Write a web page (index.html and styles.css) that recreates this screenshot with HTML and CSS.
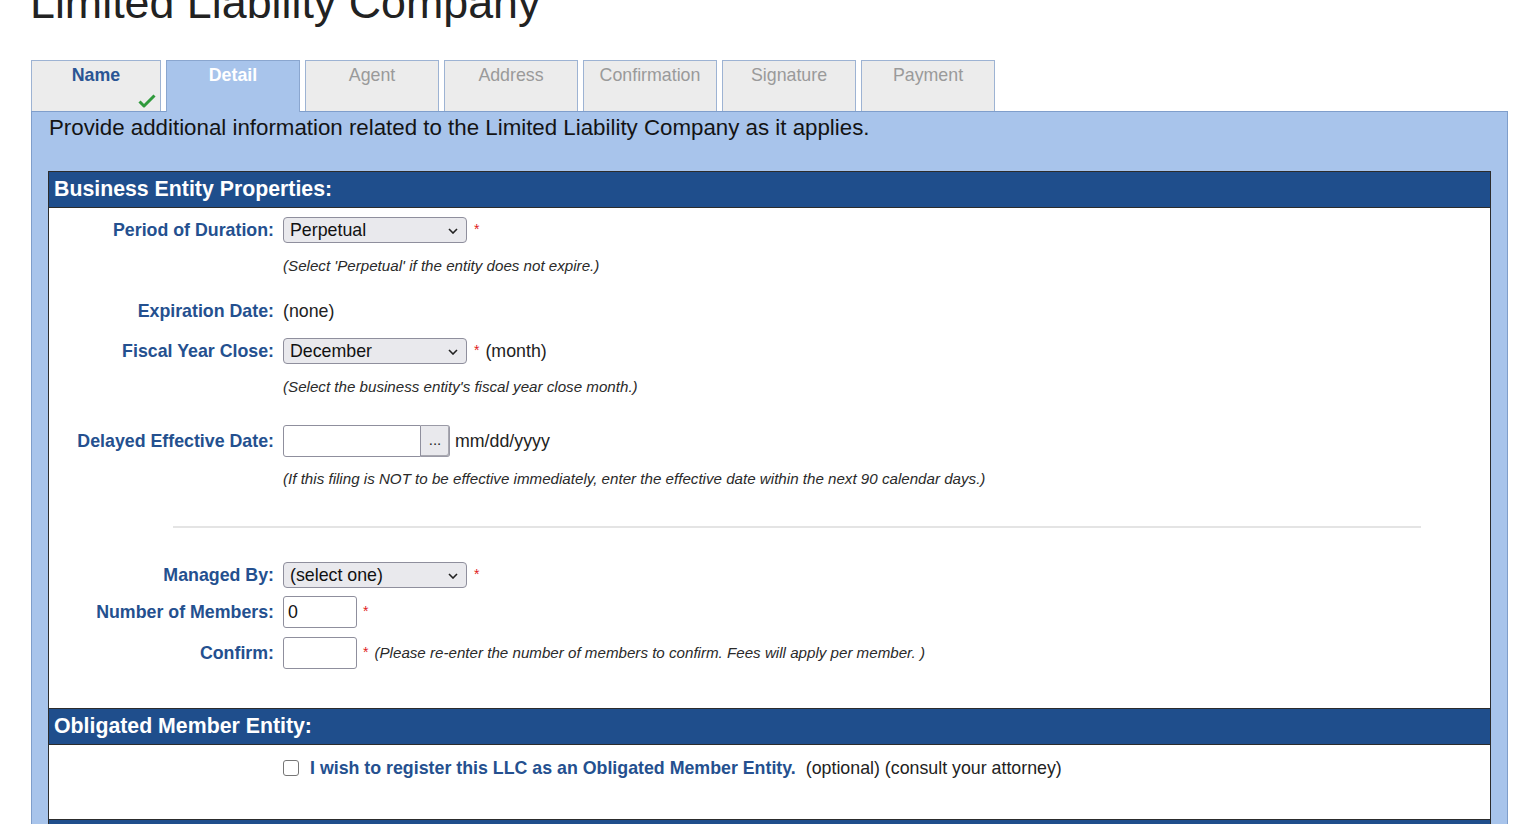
FILE: index.html
```html
<!DOCTYPE html>
<html lang="en">
<head>
<meta charset="utf-8">
<title>Limited Liability Company</title>
<link rel="stylesheet" href="styles.css">
</head>
<body>
<div class="page">
  <h1 class="title">Limited Liability Company</h1>

  <div class="tabs">
    <div class="tab tab-done tab-name">Name
      <svg class="check" width="18" height="14" viewBox="0 0 18 14"><path d="M1.5 7.5 L6 12 L16.5 1.5" fill="none" stroke="#2f9a3c" stroke-width="3" stroke-linejoin="round"/></svg>
    </div>
    <div class="tab tab-active">Detail</div>
    <div class="tab">Agent</div>
    <div class="tab">Address</div>
    <div class="tab">Confirmation</div>
    <div class="tab">Signature</div>
    <div class="tab">Payment</div>
  </div>

  <div class="panel">
    <p class="intro">Provide additional information related to the Limited Liability Company as it applies.</p>

    <div class="box">
      <div class="section-head">Business Entity Properties:</div>
      <div class="section-body">
        <div class="row row-1">
          <label class="lbl">Period of Duration:</label>
          <div class="val">
            <div class="select"><span>Perpetual</span><svg class="chev" width="10" height="6" viewBox="0 0 10 6"><path d="M1 1 L5 5 L9 1" fill="none" stroke="#222" stroke-width="1.6"/></svg></div>
            <span class="req">*</span>
          </div>
        </div>
        <div class="row hint-row hint-1">
          <span></span><div class="hint">(Select 'Perpetual' if the entity does not expire.)</div>
        </div>
        <div class="row row-exp">
          <label class="lbl">Expiration Date:</label>
          <div class="val text">(none)</div>
        </div>
        <div class="row row-fiscal">
          <label class="lbl">Fiscal Year Close:</label>
          <div class="val">
            <div class="select"><span>December</span><svg class="chev" width="10" height="6" viewBox="0 0 10 6"><path d="M1 1 L5 5 L9 1" fill="none" stroke="#222" stroke-width="1.6"/></svg></div>
            <span class="req">*</span><span class="text after-req">(month)</span>
          </div>
        </div>
        <div class="row hint-row hint-2">
          <span></span><div class="hint">(Select the business entity's fiscal year close month.)</div>
        </div>
        <div class="row row-delayed">
          <label class="lbl">Delayed Effective Date:</label>
          <div class="val">
            <div class="date-input"></div><div class="date-btn">...</div>
            <span class="text fmt">mm/dd/yyyy</span>
          </div>
        </div>
        <div class="row hint-row hint-3">
          <span></span><div class="hint">(If this filing is NOT to be effective immediately, enter the effective date within the next 90 calendar days.)</div>
        </div>
        <div class="divider"></div>
        <div class="row row-managed">
          <label class="lbl">Managed By:</label>
          <div class="val">
            <div class="select select-sm"><span>(select one)</span><svg class="chev" width="10" height="6" viewBox="0 0 10 6"><path d="M1 1 L5 5 L9 1" fill="none" stroke="#222" stroke-width="1.6"/></svg></div>
            <span class="req">*</span>
          </div>
        </div>
        <div class="row row-num">
          <label class="lbl">Number of Members:</label>
          <div class="val">
            <div class="num-input">0</div>
            <span class="req">*</span>
          </div>
        </div>
        <div class="row row-confirm">
          <label class="lbl">Confirm:</label>
          <div class="val">
            <div class="num-input"></div>
            <span class="req">*</span>
            <span class="hint inline-hint">(Please re-enter the number of members to confirm. Fees will apply per member. )</span>
          </div>
        </div>
      </div>

      <div class="section-head section-head-mid">Obligated Member Entity:</div>
      <div class="section-body section-body-ome">
        <div class="row row-check">
          <span></span>
          <div class="val">
            <span class="checkbox"></span>
            <span class="check-label">I wish to register this LLC as an Obligated Member Entity.</span>
            <span class="text opt">(optional) (consult your attorney)</span>
          </div>
        </div>
      </div>
      <div class="section-head section-head-mid"></div>
    </div>
  </div>
</div>
</body>
</html>
```

FILE: styles.css
```css
html, body {
  margin: 0;
  padding: 0;
  background: #ffffff;
  overflow: hidden;
}

body {
  font-family: "Liberation Sans", Arial, sans-serif;
  color: #222;
}

.page {
  padding-left: 31px;
  width: 1477px;
}

.title {
  margin: -20px 0 36px -1px;
  font-size: 44.8px;
  line-height: 44px;
  font-weight: normal;
  color: #222;
  height: 44px;
}

/* Tabs */
.tabs {
  display: flex;
  gap: 5px;
  height: 51px;
  position: relative;
  z-index: 2;
}

.tab {
  position: relative;
  width: 134px;
  height: 51px;
  box-sizing: border-box;
  border: 1px solid #9db3d3;
  border-bottom: none;
  background: #ececec;
  color: #9a9a9a;
  font-size: 17.8px;
  line-height: 20px;
  text-align: center;
  padding-top: 4px;
}

.tab-name {
  width: 130px;
  font-weight: bold;
  color: #2a5594;
}

.tab-active {
  background: #a8c4eb;
  color: #ffffff;
  font-weight: bold;
  height: 52px;
  border-color: #8aa6cf;
}

.check {
  position: absolute;
  right: 4px;
  bottom: 3px;
}

/* Panel */
.panel {
  background: #a8c4eb;
  border: 1px solid #7f9ecb;
  padding: 0 16px;
}

.intro {
  margin: 0;
  padding: 4px 0 0 1px;
  font-size: 22.3px;
  line-height: 24px;
  color: #141414;
  height: 55px;
}

.box {
  background: #ffffff;
  border: 1px solid #2c2c2c;
  border-bottom: none;
}

.section-head {
  background: #1f4e8c;
  color: #ffffff;
  font-weight: bold;
  font-size: 21.3px;
  height: 35px;
  line-height: 35px;
  padding-left: 5px;
  border-bottom: 1px solid #2c2c2c;
}

.section-head-mid {
  border-top: 1px solid #2c2c2c;
}

.section-body {
  padding-top: 9px;
  padding-bottom: 39px;
}

.row {
  display: grid;
  grid-template-columns: 225px 1fr;
  column-gap: 9px;
  align-items: center;
}

.lbl {
  text-align: right;
  font-weight: bold;
  color: #24508f;
  font-size: 17.8px;
  line-height: 22px;
}

.val {
  display: flex;
  align-items: center;
}

.text {
  font-size: 17.8px;
  color: #222;
  line-height: 22px;
}

.hint {
  font-style: italic;
  font-size: 15.15px;
  color: #2a2a2a;
  line-height: 18px;
}

.row-1 { height: 26px; }
.hint-1 { margin-top: 14px; height: 18px; }
.row-exp { margin-top: 23px; height: 26px; }
.row-fiscal { margin-top: 14px; height: 26px; }
.hint-2 { margin-top: 14px; height: 18px; }
.row-delayed { margin-top: 29px; height: 32px; }
.hint-3 { margin-top: 13px; height: 18px; }
.row-managed { margin-top: 34px; height: 26px; }
.row-num { margin-top: 8px; height: 32px; }
.row-confirm { margin-top: 9px; height: 32px; }

.divider {
  margin: 38px 0 0 124px;
  width: 1248px;
  height: 2px;
  background: #e4e4e4;
}

/* Select look-alike */
.select {
  position: relative;
  width: 184px;
  height: 26px;
  box-sizing: border-box;
  border: 1px solid #8f8f9d;
  border-radius: 4px;
  background: #e9e9ed;
  font-size: 17.8px;
  line-height: 24px;
  padding-left: 6px;
  color: #111;
}

.chev {
  position: absolute;
  right: 8px;
  top: 10px;
}

.req {
  color: #e02020;
  font-size: 14px;
  align-self: flex-start;
  margin: 1px 0 0 7px;
  line-height: 14px;
}

.after-req {
  margin-left: 6px;
}

.row-fiscal .req,
.row-1 .req,
.row-managed .req {
  margin-top: 5px;
}

.row-num .req,
.row-confirm .req {
  margin: 8px 0 0 6px;
}

.inline-hint {
  margin-left: 6px;
}

/* Date input */
.date-input {
  width: 138px;
  height: 32px;
  box-sizing: border-box;
  border: 1px solid #8f8f9d;
  border-radius: 3px 0 0 3px;
  background: #fff;
}

.date-btn {
  width: 29px;
  height: 32px;
  box-sizing: border-box;
  border: 1px solid #9a9aa6;
  border-left: none;
  border-radius: 0 3px 3px 0;
  background: #e9e9ed;
  box-shadow: inset -1px -1px 0 #a8a8b0;
  font-size: 15px;
  line-height: 28px;
  text-align: center;
  color: #222;
}

.fmt {
  margin-left: 5px;
}

.num-input {
  width: 74px;
  height: 32px;
  box-sizing: border-box;
  border: 1px solid #8f8f9d;
  border-radius: 3px;
  background: #fff;
  font-size: 17.8px;
  line-height: 30px;
  padding-left: 4px;
  color: #111;
}

/* Obligated member section */
.section-body-ome {
  padding-top: 12px;
  padding-bottom: 40px;
}

.row-check { height: 22px; }

.checkbox {
  width: 16px;
  height: 16px;
  box-sizing: border-box;
  border: 1.5px solid #767676;
  border-radius: 3px;
  background: #fff;
  margin-right: 11px;
}

.check-label {
  font-weight: bold;
  color: #24508f;
  font-size: 17.8px;
  line-height: 22px;
}

.opt {
  margin-left: 10px;
}
```
